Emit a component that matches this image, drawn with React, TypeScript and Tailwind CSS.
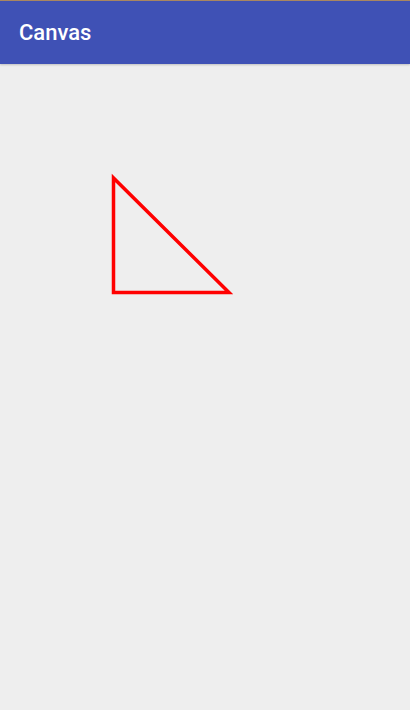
export default function App() {
  return (
    <div className="flex h-[710px] w-[410px] flex-col bg-[#eeeeee]" style={{ fontFamily: 'Roboto, "Noto Sans", sans-serif' }}>
      <header className="flex h-[64px] shrink-0 items-center border-t border-[#a98660] bg-[#3f51b5] px-[19px] shadow-[0_1px_2px_rgba(0,0,0,0.2)]">
        <h1 className="text-[22px] font-medium text-white">Canvas</h1>
      </header>
      <div className="flex-1">
        <svg width="410" height="646" viewBox="0 64 410 646" className="block">
          <polygon points="113.5,178 113.5,292.5 229,292.5" fill="none" stroke="#ff0000" strokeWidth="3.5" strokeLinejoin="miter" />
        </svg>
      </div>
    </div>
  );
}
